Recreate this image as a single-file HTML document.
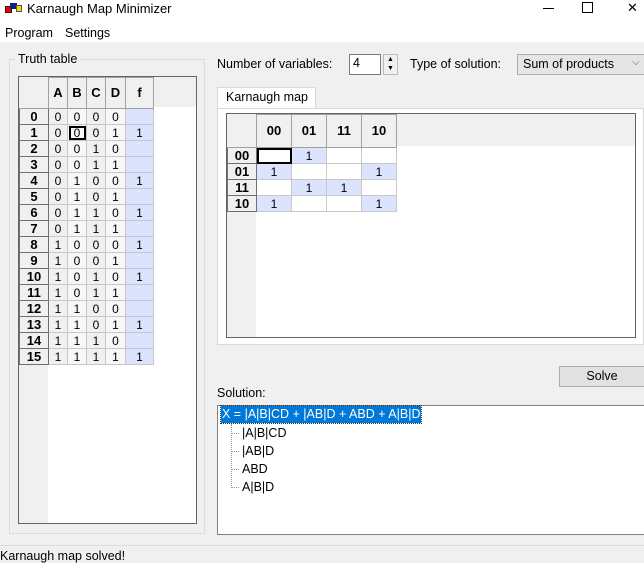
<!DOCTYPE html>
<html><head><meta charset="utf-8"><style>
*{margin:0;padding:0;box-sizing:border-box}
body{width:644px;height:559px;background:#f0f0f0;font-family:"Liberation Sans","Noto Sans CJK KR",sans-serif;font-size:12px;color:#000;position:relative;overflow:hidden}
.a{position:absolute}
table{border-collapse:collapse;table-layout:fixed;position:absolute}
td{border:1px solid #c8c8c8;text-align:center;font-size:12px;height:16px;line-height:14px;padding:0}
td.h{background:#f0f0f0;font-weight:bold;border-color:#a0a0a0}
td.rh{background:#f0f0f0;font-weight:bold;font-size:13px;border:1px solid #707070}
td.g{background:#f0f0f0}
td.l{background:#f7f7f7}
td.f{background:#dce3fc}
td.w{background:#fff}
</style></head><body>
<div class="a" style="left:0;top:0;width:644px;height:42px;background:#fff"></div>
<div class="a" style="left:5px;top:6px;width:7px;height:7px;background:#d01010;border:1px solid #600"></div>
<div class="a" style="left:10px;top:3px;width:7px;height:6px;background:#102080"></div>
<div class="a" style="left:16px;top:5px;width:6px;height:7px;background:#f0e000;border:1px solid #555"></div>
<div class="a" style="left:27px;top:1px;font-size:13px">Karnaugh Map Minimizer</div>
<div class="a" style="left:543px;top:8px;width:11px;height:1px;background:#000"></div>
<div class="a" style="left:582px;top:2px;width:11px;height:11px;border:1px solid #000"></div>
<div class="a" style="left:627px;top:0px;font-size:13px">✕</div>
<div class="a" style="left:5px;top:26px;font-size:12.5px">Program</div>
<div class="a" style="left:65px;top:26px;font-size:12.5px">Settings</div>

<div class="a" style="left:9px;top:59px;width:196px;height:475px;border:1px solid #dcdcdc"></div>
<div class="a" style="left:15px;top:52px;background:#f0f0f0;padding:0 3px;font-size:12.5px">Truth table</div>
<div class="a" style="left:18px;top:76px;width:179px;height:448px;border:1px solid #646464;background:#fff"></div>
<div class="a" style="left:19px;top:77px;width:29px;height:446px;background:#f0f0f0"></div>
<div class="a" style="left:19px;top:77px;width:177px;height:30px;background:#f0f0f0"></div>
<table style="left:19px;top:77px;width:134px">
<col style="width:29px"><col style="width:19px"><col style="width:19px"><col style="width:19px"><col style="width:20px"><col style="width:28px">
<tr><td class="h" style="height:31px;border-top:none;border-left:none"></td><td class="h" style="font-size:13px">A</td><td class="h" style="font-size:13px">B</td><td class="h" style="font-size:13px">C</td><td class="h" style="font-size:13px">D</td><td class="h" style="font-size:13px">f</td></tr>
<tr><td class="rh">0</td><td class="g">0</td><td class="l">0</td><td class="g">0</td><td class="l">0</td><td class="f"></td></tr>
<tr><td class="rh">1</td><td class="g">0</td><td class="l" style="outline:2px solid #000;outline-offset:-3px">0</td><td class="g">0</td><td class="l">1</td><td class="f">1</td></tr>
<tr><td class="rh">2</td><td class="g">0</td><td class="l">0</td><td class="g">1</td><td class="l">0</td><td class="f"></td></tr>
<tr><td class="rh">3</td><td class="g">0</td><td class="l">0</td><td class="g">1</td><td class="l">1</td><td class="f"></td></tr>
<tr><td class="rh">4</td><td class="g">0</td><td class="l">1</td><td class="g">0</td><td class="l">0</td><td class="f">1</td></tr>
<tr><td class="rh">5</td><td class="g">0</td><td class="l">1</td><td class="g">0</td><td class="l">1</td><td class="f"></td></tr>
<tr><td class="rh">6</td><td class="g">0</td><td class="l">1</td><td class="g">1</td><td class="l">0</td><td class="f">1</td></tr>
<tr><td class="rh">7</td><td class="g">0</td><td class="l">1</td><td class="g">1</td><td class="l">1</td><td class="f"></td></tr>
<tr><td class="rh">8</td><td class="g">1</td><td class="l">0</td><td class="g">0</td><td class="l">0</td><td class="f">1</td></tr>
<tr><td class="rh">9</td><td class="g">1</td><td class="l">0</td><td class="g">0</td><td class="l">1</td><td class="f"></td></tr>
<tr><td class="rh">10</td><td class="g">1</td><td class="l">0</td><td class="g">1</td><td class="l">0</td><td class="f">1</td></tr>
<tr><td class="rh">11</td><td class="g">1</td><td class="l">0</td><td class="g">1</td><td class="l">1</td><td class="f"></td></tr>
<tr><td class="rh">12</td><td class="g">1</td><td class="l">1</td><td class="g">0</td><td class="l">0</td><td class="f"></td></tr>
<tr><td class="rh">13</td><td class="g">1</td><td class="l">1</td><td class="g">0</td><td class="l">1</td><td class="f">1</td></tr>
<tr><td class="rh">14</td><td class="g">1</td><td class="l">1</td><td class="g">1</td><td class="l">0</td><td class="f"></td></tr>
<tr><td class="rh">15</td><td class="g">1</td><td class="l">1</td><td class="g">1</td><td class="l">1</td><td class="f">1</td></tr>
</table>

<div class="a" style="left:217px;top:57px;font-size:12.5px">Number of variables:</div>
<div class="a" style="left:349px;top:54px;width:32px;height:21px;border:1px solid #7a7a7a;background:#fff;padding:1px 3px;font-size:12.5px">4</div>
<div class="a" style="left:383px;top:54px;width:15px;height:21px;border:1px solid #bbb;background:#f0f0f0;font-size:7px;line-height:9px;text-align:center">▲<br>▼</div>
<div class="a" style="left:410px;top:57px;font-size:12.5px">Type of solution:</div>
<div class="a" style="left:517px;top:54px;width:130px;height:21px;border:1px solid #adadad;background:#e5e5e5;padding:2px 5px;font-size:12.5px">Sum of products<span style="position:absolute;left:114px;top:2px;font-size:10px;color:#555">⌵</span></div>

<div class="a" style="left:217px;top:87px;width:99px;height:22px;border:1px solid #d9d9d9;border-bottom:none;background:#fff;padding:2px 0 0 8px;font-size:12.5px">Karnaugh map</div>
<div class="a" style="left:217px;top:108px;width:427px;height:237px;border:1px solid #d9d9d9;background:#fff"></div>
<div class="a" style="left:226px;top:113px;width:410px;height:225px;border:1px solid #646464;background:#fff"></div>
<div class="a" style="left:227px;top:114px;width:29px;height:223px;background:#f0f0f0"></div>
<div class="a" style="left:227px;top:114px;width:408px;height:32px;background:#f0f0f0"></div>
<table style="left:227px;top:114px;width:169px">
<col style="width:29px"><col style="width:35px"><col style="width:35px"><col style="width:35px"><col style="width:35px">
<tr><td class="h" style="height:33px;border-top:none;border-left:none"></td><td class="h" style="font-size:13px">00</td><td class="h" style="font-size:13px">01</td><td class="h" style="font-size:13px">11</td><td class="h" style="font-size:13px">10</td></tr>
<tr><td class="rh">00</td><td class="w" style="outline:2px solid #000;outline-offset:-2px"></td><td class="f">1</td><td class="w"></td><td class="w"></td></tr>
<tr><td class="rh">01</td><td class="f">1</td><td class="w"></td><td class="w"></td><td class="f">1</td></tr>
<tr><td class="rh">11</td><td class="w"></td><td class="f">1</td><td class="f">1</td><td class="w"></td></tr>
<tr><td class="rh">10</td><td class="f">1</td><td class="w"></td><td class="w"></td><td class="f">1</td></tr>
</table>

<div class="a" style="left:559px;top:366px;width:86px;height:21px;border:1px solid #adadad;background:#e1e1e1;text-align:center;line-height:19px;font-size:12.5px">Solve</div>
<div class="a" style="left:217px;top:386px;font-size:12.5px">Solution:</div>
<div class="a" style="left:217px;top:405px;width:430px;height:130px;border:1px solid #828282;background:#fff"></div>
<div class="a" style="left:221px;top:406px;width:200px;height:17px;background:#0078d7;color:#fff;outline:1px dotted #333;padding:1px 0 0 1px;font-size:12.5px">X = |A|B|CD + |AB|D + ABD + A|B|D</div>
<div class="a" style="left:231px;top:424px;width:1px;height:64px;border-left:1px dotted #999"></div>
<div class="a" style="left:232px;top:433px;width:7px;border-top:1px dotted #999"></div>
<div class="a" style="left:232px;top:451px;width:7px;border-top:1px dotted #999"></div>
<div class="a" style="left:232px;top:469px;width:7px;border-top:1px dotted #999"></div>
<div class="a" style="left:232px;top:487px;width:7px;border-top:1px dotted #999"></div>
<div class="a" style="left:242px;top:426px;font-size:12.5px">|A|B|CD</div>
<div class="a" style="left:242px;top:444px;font-size:12.5px">|AB|D</div>
<div class="a" style="left:242px;top:462px;font-size:12.5px">ABD</div>
<div class="a" style="left:242px;top:480px;font-size:12.5px">A|B|D</div>

<div class="a" style="left:0;top:545px;width:644px;height:1px;background:#dcdcdc"></div>
<div class="a" style="left:0;top:549px;font-size:12.5px">Karnaugh map solved!</div>
</body></html>
